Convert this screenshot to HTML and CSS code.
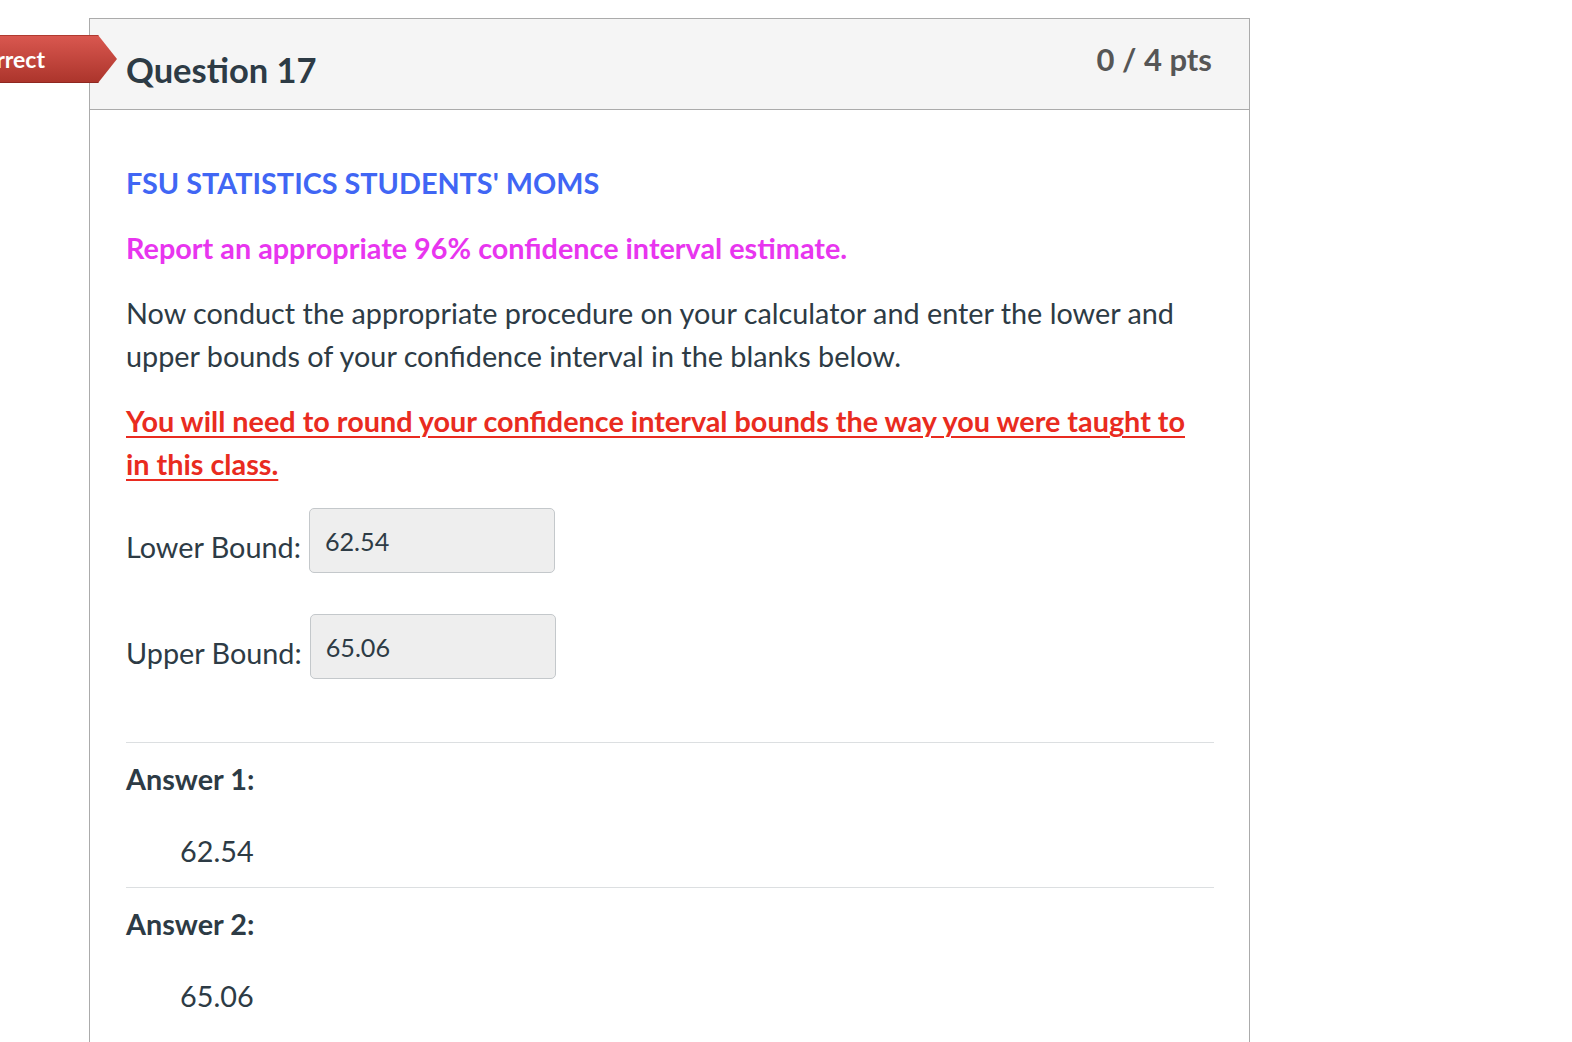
FILE: index.html
```html
<!DOCTYPE html>
<html lang="en">
<head>
<meta charset="utf-8">
<title>Question 17</title>
<link rel="stylesheet" href="styles.css">
</head>
<body>
<div class="page">
  <div class="answer-arrow">Incorrect</div>
  <div class="question">
    <div class="question-header">
      <h2 class="question-name">Question 17</h2>
      <div class="question-points">0 / 4 pts</div>
    </div>
    <div class="question-body">
      <p class="topic">FSU STATISTICS STUDENTS' MOMS</p>
      <p class="prompt">Report an appropriate 96% confidence interval estimate.</p>
      <p>Now conduct the appropriate procedure on your calculator and enter the lower and upper bounds of your confidence interval in the blanks below.</p>
      <p class="warning">You will need to round your confidence interval bounds the way you were taught to in this class.</p>
      <div class="bound-row">
        <span class="bound-label">Lower Bound:</span>
        <span class="bound-field">62.54</span>
      </div>
      <div class="bound-row">
        <span class="bound-label">Upper Bound:</span>
        <span class="bound-field">65.06</span>
      </div>
      <div class="answers">
        <div class="answer">
          <div class="answer-label">Answer 1:</div>
          <div class="answer-value">62.54</div>
        </div>
        <div class="answer">
          <div class="answer-label">Answer 2:</div>
          <div class="answer-value">65.06</div>
        </div>
      </div>
    </div>
  </div>
</div>
</body>
</html>
```

FILE: styles.css
```css
* { box-sizing: border-box; }

html, body {
  margin: 0;
  padding: 0;
  background: #ffffff;
}

body {
  font-family: Lato, "Open Sans", "Liberation Sans", sans-serif;
  color: #2d3b45;
  overflow: hidden;
}

.page {
  position: relative;
  padding: 18px 0 0 89px;
}

.answer-arrow {
  position: absolute;
  left: -60px;
  top: 35px;
  width: 177px;
  height: 48px;
  padding-right: 72px;
  text-align: right;
  font-size: 23px;
  font-weight: 700;
  line-height: 48px;
  color: #ffffff;
  background: linear-gradient(#da5850, #ab342b);
  box-shadow: inset 0 1px 0 #b03a30, inset 0 -1px 0 #8f2720;
  clip-path: polygon(0 0, 158px 0, 177px 50%, 158px 100%, 0 100%);
  z-index: 2;
}

.question {
  width: 1161px;
  min-height: 1030px;
  border: 1px solid #ababab;
  border-bottom: none;
}

.question-header {
  height: 91px;
  background: #f5f5f5;
  border-bottom: 1px solid #ababab;
  display: flex;
  justify-content: space-between;
  align-items: flex-start;
  padding: 0 37px 0 36px;
}

.question-name {
  margin: 33px 0 0;
  font-size: 34.5px;
  line-height: 35px;
  font-weight: 700;
  color: #2d3b45;
}

.question-points {
  margin-top: 25px;
  font-size: 31px;
  line-height: 31px;
  font-weight: 700;
  color: #565656;
}

.question-body {
  padding: 52px 35px 0 36px;
  font-size: 28.8px;
  line-height: 43px;
}

.question-body p {
  margin: 0 0 22px;
}

.topic {
  color: #4066f4;
  font-weight: 700;
}

.prompt {
  color: #e835ef;
  font-weight: 700;
}

.warning {
  color: #e92b20;
  font-weight: 700;
  text-decoration: underline;
  text-decoration-thickness: 2px;
  text-underline-offset: 4px;
}

.bound-row {
  display: flex;
  align-items: flex-start;
  gap: 8px;
  margin-bottom: 41px;
}

.bound-label {
  margin-top: 18px;
}

.bound-field {
  width: 246px;
  height: 65px;
  padding: 17px 0 0 15px;
  font-size: 25.2px;
  line-height: 30px;
  background: #eeeeee;
  border: 1px solid #c4c8cb;
  border-radius: 5px;
  color: #2d3b45;
}

.answers {
  margin-top: 63px;
}

.answer {
  border-top: 1px solid #dcdfe1;
  padding: 15px 0 14px;
}

.answer-label {
  font-weight: 700;
}

.answer-value {
  margin-top: 29px;
  padding-left: 54px;
}
```
